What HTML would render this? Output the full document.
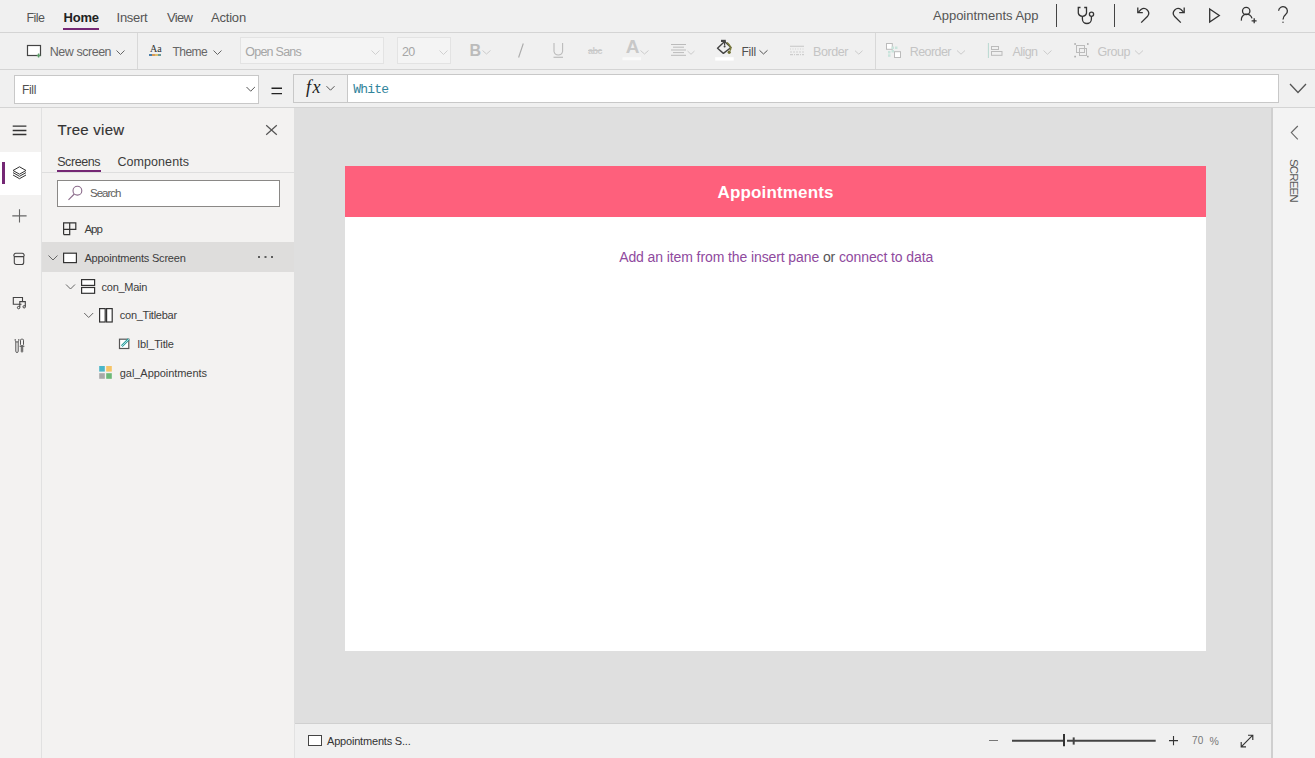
<!DOCTYPE html>
<html><head><meta charset="utf-8">
<style>
*{margin:0;padding:0;box-sizing:border-box}
html,body{width:1315px;height:758px;overflow:hidden;background:#f0f0f0;font-family:"Liberation Sans",sans-serif;color:#333}
.a{position:absolute;white-space:nowrap}
svg{position:absolute;overflow:visible}
.t{position:absolute;white-space:nowrap;line-height:1}
</style></head><body>
<!-- menu bar -->
<div class="a" style="left:0;top:0;width:1315px;height:32px;background:#f0f0f0"></div>
<div class="a" style="left:0;top:32px;width:1315px;height:1px;background:#d4d4d4"></div>
<div class="t" id="m-file" style="left:26.40px;top:12.00px;font-size:12.5px;color:#555;letter-spacing:-0.52px">File</div>
<div class="t" id="m-home" style="left:63.60px;top:11.00px;font-size:13px;color:#222;font-weight:bold;letter-spacing:-0.21px">Home</div>
<div class="a" style="left:63px;top:28px;width:36px;height:2px;background:#742774"></div>
<div class="t" id="m-ins" style="left:116.60px;top:11.00px;font-size:13px;color:#555;letter-spacing:-0.32px">Insert</div>
<div class="t" id="m-view" style="left:167.00px;top:11.00px;font-size:13px;color:#555;letter-spacing:-0.67px">View</div>
<div class="t" id="m-act" style="left:211.00px;top:11.00px;font-size:13px;color:#555;letter-spacing:-0.20px">Action</div>
<div class="t" id="m-app" style="left:933.00px;top:9.00px;font-size:13px;color:#555;letter-spacing:0.00px">Appointments App</div>
<div class="a" style="left:1056px;top:4px;width:1px;height:23px;background:#444"></div>
<div class="a" style="left:1114px;top:4px;width:1px;height:23px;background:#444"></div>

<!-- toolbar -->
<div class="a" style="left:0;top:69px;width:1315px;height:1px;background:#d4d4d4"></div>
<div class="a" style="left:137px;top:33px;width:1px;height:36px;background:#d8d8d8"></div>
<div class="a" style="left:875px;top:33px;width:1px;height:36px;background:#d8d8d8"></div>
<div class="t" id="tb-new" style="left:49.80px;top:46.00px;font-size:12.5px;color:#666;letter-spacing:-0.47px">New screen</div>
<div class="t" id="tb-theme" style="left:172.40px;top:46.00px;font-size:12px;color:#666;letter-spacing:-0.50px">Theme</div>
<div class="a" style="left:240px;top:37px;width:144px;height:27px;background:#f4f4f4;border:1px solid #e3e3e3"></div>
<div class="t" id="tb-font" style="left:245.20px;top:46.00px;font-size:12.5px;color:#a6a6a6;letter-spacing:-0.74px">Open Sans</div>
<div class="a" style="left:397px;top:37px;width:54px;height:27px;background:#f4f4f4;border:1px solid #e3e3e3"></div>
<div class="t" id="tb-size" style="left:402.00px;top:46.00px;font-size:12.5px;color:#a6a6a6;letter-spacing:-0.60px">20</div>
<div class="t" id="tb-fill" style="left:741.40px;top:46px;font-size:12px;color:#505050;letter-spacing:-0.2px">Fill</div>
<div class="t" id="tb-border" style="left:813.00px;top:46.00px;font-size:12.5px;color:#c4c4c4;letter-spacing:-0.40px">Border</div>
<div class="t" id="tb-reorder" style="left:909.80px;top:46.00px;font-size:12.5px;color:#c4c4c4;letter-spacing:-0.58px">Reorder</div>
<div class="t" id="tb-align" style="left:1012.60px;top:46.00px;font-size:12.5px;color:#c4c4c4;letter-spacing:-0.59px">Align</div>
<div class="t" id="tb-group" style="left:1097.60px;top:46.00px;font-size:12.5px;color:#c4c4c4;letter-spacing:-0.50px">Group</div>

<div class="t" id="ic-aa" style="left:150px;top:44.00px;font-size:10px;color:#333;font-family:'Liberation Serif',serif;letter-spacing:0px">Aa</div>
<div class="a" style="left:149px;top:54px;width:3px;height:2px;background:#4a7faa"></div>
<div class="a" style="left:152px;top:54px;width:3px;height:2px;background:#d99a5a"></div>
<div class="a" style="left:155px;top:54px;width:3px;height:2px;background:#e0c070"></div>
<div class="a" style="left:158px;top:54px;width:3px;height:2px;background:#6a9a9a"></div>
<div class="t" id="ic-b" style="left:469.40px;top:43.20px;font-size:16px;color:#bbb;font-weight:bold;letter-spacing:0.00px">B</div>
<div class="t" id="ic-a" style="left:625.70px;top:36.80px;font-size:19px;color:#c8c8c8;font-weight:bold;letter-spacing:0.00px">A</div>
<div class="t" id="ic-abe" style="left:588.00px;top:47.40px;font-size:9px;color:#cccccc;font-weight:bold;letter-spacing:-0.50px">abc</div>
<!-- formula bar -->
<div class="a" style="left:0;top:107px;width:1315px;height:1px;background:#d4d4d4"></div>
<div class="a" style="left:14px;top:75px;width:245px;height:29px;background:#fff;border:1px solid #c8c8c8"></div>
<div class="t" id="fb-fill" style="left:22.00px;top:84.00px;font-size:12px;color:#505050;letter-spacing:-0.34px">Fill</div>
<div class="a" style="left:293px;top:74px;width:55px;height:29px;background:#f0f0f0;border:1px solid #c8c8c8"></div>
<div class="a" style="left:347px;top:74px;width:932px;height:29px;background:#fff;border:1px solid #c8c8c8"></div>
<div class="t" id="ic-fx" style="left:306px;top:78px;font-size:18px;color:#222;font-family:'Liberation Serif',serif;font-style:italic;letter-spacing:1.5px">fx</div>
<div class="t" id="fb-white" style="left:353.20px;top:83.00px;font-size:13px;color:#31849b;font-family:'Liberation Mono',monospace;letter-spacing:-0.80px">White</div>

<!-- left rail -->
<div class="a" style="left:0;top:108px;width:41px;height:650px;background:#f3f2f1"></div>
<div class="a" style="left:41px;top:108px;width:1px;height:650px;background:#e1e1e1"></div>
<div class="a" style="left:0;top:152px;width:41px;height:43px;background:#fff"></div>
<div class="a" style="left:2px;top:162px;width:3px;height:22px;background:#742774"></div>

<!-- tree panel -->
<div class="a" style="left:42px;top:108px;width:252px;height:650px;background:#f3f2f1"></div>
<div class="t" id="tv-title" style="-webkit-text-stroke:0.15px #333;left:57.60px;top:122.20px;font-size:15px;color:#333;letter-spacing:0.26px">Tree view</div>
<div class="t" id="tv-screens" style="left:57.20px;top:156.00px;font-size:12.5px;color:#3c3c3c;letter-spacing:-0.42px">Screens</div>
<div class="a" style="left:57px;top:170px;width:44px;height:2px;background:#742774"></div>
<div class="t" id="tv-comp" style="left:117.40px;top:156.00px;font-size:12.5px;color:#3c3c3c;letter-spacing:0.08px">Components</div>
<div class="a" style="left:42px;top:172px;width:252px;height:1px;background:#dedede"></div>
<div class="a" style="left:57px;top:180px;width:223px;height:27px;background:#fff;border:1px solid #8a8886"></div>
<div class="t" id="tv-search" style="left:90.00px;top:188.20px;font-size:11.5px;color:#605e5c;letter-spacing:-1.00px">Search</div>
<div class="t" id="tv-app" style="left:84.40px;top:224.00px;font-size:11.5px;color:#3c3c3c;letter-spacing:-1.00px">App</div>
<div class="a" style="left:42px;top:242px;width:252px;height:30px;background:#dedddc"></div>
<div class="t" id="tv-scr" style="left:84.40px;top:253.00px;font-size:11px;color:#3c3c3c;letter-spacing:-0.21px">Appointments Screen</div>
<div class="t" id="tv-main" style="left:101.60px;top:282.00px;font-size:11px;color:#3c3c3c;letter-spacing:-0.29px">con_Main</div>
<div class="t" id="tv-tb" style="left:119.80px;top:310.00px;font-size:11px;color:#3c3c3c;letter-spacing:-0.26px">con_Titlebar</div>
<div class="t" id="tv-lbl" style="left:137.60px;top:339.00px;font-size:11px;color:#3c3c3c;letter-spacing:-0.14px">lbl_Title</div>
<div class="t" id="tv-gal" style="left:119.80px;top:368.00px;font-size:11px;color:#3c3c3c;letter-spacing:-0.06px">gal_Appointments</div>

<!-- canvas area -->
<div class="a" style="left:294px;top:108px;width:977px;height:615px;background:#dfdfdf"></div>
<div class="a" style="left:345px;top:166px;width:861px;height:485px;background:#fff"></div>
<div class="a" style="left:345px;top:166px;width:861px;height:51px;background:#fe607c"></div>
<div class="t" id="cv-title" style="left:717.60px;top:183.80px;font-size:17px;color:#fff;font-weight:bold;letter-spacing:0.15px">Appointments</div>
<div class="t" id="cv-add" style="left:619.20px;top:249.60px;font-size:14px;color:#8f4a9e;letter-spacing:-0.10px">Add an item from the insert pane <span style="color:#555">or</span> connect to data</div>

<!-- bottom bar -->
<div class="a" style="left:294px;top:723px;width:977px;height:1px;background:#d0d0d0"></div>
<div class="a" style="left:294px;top:724px;width:977px;height:34px;background:#f0f0f0"></div>
<div class="a" style="left:308px;top:735px;width:14px;height:11px;background:#fff;border:1px solid #444"></div>
<div class="t" id="bb-scr" style="left:327.00px;top:735.60px;font-size:11px;color:#333;letter-spacing:-0.19px">Appointments S...</div>
<div class="t" id="bb-70" style="left:1192.00px;top:736.00px;font-size:10px;color:#777;letter-spacing:0.2px">70</div>
<div class="t" id="bb-pct" style="left:1209.40px;top:736.00px;font-size:10.5px;color:#777;letter-spacing:0.00px">%</div>

<div class="a" style="left:294px;top:723px;width:1px;height:35px;background:#e2e2e2"></div>
<!-- right panel -->
<div class="a" style="left:1271px;top:108px;width:2px;height:650px;background:#cfcfcf"></div>
<div class="a" style="left:1273px;top:108px;width:42px;height:650px;background:#f3f3f3"></div>
<div class="t" id="rp-screen" style="left:1287.4px;top:159px;font-size:11.5px;color:#5a5a5a;writing-mode:vertical-rl;letter-spacing:-0.85px">SCREEN</div>


<svg width="1315" height="758" style="left:0;top:0" fill="none" stroke-linecap="butt">
<!-- top right icons -->
<g stroke="#333" stroke-width="1.3">
 <path d="M1080.5 7.5H1078.3V13A4.2 4.2 0 0 0 1086.5 13V7.5H1084.2"/>
 <path d="M1082.4 17V19A4.5 4.5 0 0 0 1091.4 19V16.4"/>
 <circle cx="1091.5" cy="14.2" r="2.1"/>
 <path d="M1141.2 22.6L1147.6 16.2A4.7 4.7 0 0 0 1141 9.6L1138.2 12.4"/>
 <path d="M1137.8 7.6V12.6H1142.8"/>
 <path d="M1180.8 22.6L1174.4 16.2A4.7 4.7 0 0 1 1181 9.6L1183.8 12.4"/>
 <path d="M1184.2 7.6V12.6H1179.2"/>
 <path d="M1209.7 9L1219.3 15.5L1209.7 22Z" stroke-linejoin="miter"/>
 <circle cx="1246.2" cy="11" r="3.7"/>
 <path d="M1241.4 20.6A5.2 5.2 0 0 1 1252 18.4"/>
 <path d="M1251.6 20.9H1256.6M1254.2 18.3V23.3"/>
 <path d="M1278.6 10.8A4.4 4.4 0 1 1 1285.6 14.6C1283.6 16.2 1283 17 1283 19.5"/>
</g>
<circle cx="1283" cy="22.2" r="0.7" fill="#333"/>
<!-- toolbar icons -->
<rect x="27.5" y="45.5" width="13" height="10" fill="#fff" stroke="#444" stroke-width="1.2"/>
<path d="M36.8 55.5H40.4M38.6 53.6V57.4" stroke="#5a9a66" stroke-width="1.4"/>
<path d="M116.5 50.5L120.5 54.5L124.5 50.5" stroke="#666" stroke-width="1"/>
<path d="M213.5 50.5L217.5 54.5L221.5 50.5" stroke="#666" stroke-width="1"/>
<path d="M371.5 50.5L375.5 54.5L379.5 50.5" stroke="#d0d0d0" stroke-width="1"/>
<path d="M439.5 50.5L443.5 54.5L447.5 50.5" stroke="#d0d0d0" stroke-width="1"/>
<path d="M482.5 50.5L486.5 54L490.5 50.5" stroke="#ccc" stroke-width="1"/>
<path d="M523.3 43.5L518.6 57.5" stroke="#aaa" stroke-width="1.1"/>
<path d="M554 43V51.5A4.4 4.4 0 0 0 562.6 51.5V43" stroke="#bbb" stroke-width="1.1"/>
<path d="M553.5 57.3H563" stroke="#bbb" stroke-width="1.2"/>
<path d="M588 50.5H602" stroke="#c8c8c8" stroke-width="1"/>
<path d="M640.5 50.5L644.5 54L648.5 50.5" stroke="#ccc" stroke-width="1"/>
<rect x="622.5" y="57.3" width="18.5" height="3" fill="#f9f9f9"/>
<path d="M671 44.5H686M673 47.2H684M671 50H686M673 52.6H684M671 55.3H686" stroke="#bbb" stroke-width="1"/>
<path d="M687.5 51L691 54.3L694.5 51" stroke="#ccc" stroke-width="1"/>
<!-- fill icon -->
<path d="M717.5 48.2L724.6 41.6L731 47.5L723.4 53.4Z" stroke="#444" stroke-width="1.4" stroke-linejoin="round"/>
<rect x="721" y="39.8" width="4.8" height="2.2" fill="#444"/><path d="M724.6 42V45.5" stroke="#444" stroke-width="1.2"/>
<circle cx="724.6" cy="46.5" r="1" fill="#444"/>
<path d="M727 42.5C730 45 731.5 48 730 50.5" stroke="#7b7b3a" stroke-width="1.6"/>
<ellipse cx="729.2" cy="52.2" rx="1.6" ry="1.8" fill="#6e6e30"/>
<rect x="715.2" y="57.2" width="18.5" height="3.4" fill="#fff"/>
<path d="M759.5 50.3L763.5 54L767.5 50.3" stroke="#555" stroke-width="1"/>
<path d="M790 46.3H804" stroke="#ccc" stroke-width="1.2"/>
<path d="M790 49H804" stroke="#d4d4d4" stroke-width="1" stroke-dasharray="1 1.5"/>
<path d="M790 52H804" stroke="#d0d0d0" stroke-width="1.2" stroke-dasharray="2 1"/>
<path d="M790 54.6H804" stroke="#cdcdcd" stroke-width="1.2" stroke-dasharray="3 1 1 1"/>
<path d="M855 50.7L858.8 54.2L862.5 50.7" stroke="#ccc" stroke-width="1"/>
<rect x="886.5" y="43.5" width="5.8" height="5.8" fill="#fff" stroke="#bbb" stroke-width="1"/>
<rect x="894.5" y="51.7" width="6" height="5.8" fill="#fff" stroke="#bbb" stroke-width="1"/>
<g fill="#c9e4dc"><rect x="888" y="51" width="2.5" height="2.5"/><rect x="888" y="54.3" width="2.5" height="2.5"/><rect x="891.5" y="46.5" width="2.5" height="2.5"/><rect x="895" y="46.5" width="2.5" height="2.5"/><rect x="891.5" y="50" width="2.5" height="2.5"/></g>
<path d="M957 50.5L961 54.2L965 50.5" stroke="#ccc" stroke-width="1"/>
<path d="M988.4 43V58" stroke="#b8d8d0" stroke-width="1"/>
<rect x="991.5" y="46.5" width="7" height="3" stroke="#bbb" stroke-width="1"/>
<rect x="991.5" y="51.5" width="10.5" height="3.8" stroke="#bbb" stroke-width="1"/>
<path d="M1043.5 50.5L1047.5 54.3L1051.5 50.5" stroke="#ccc" stroke-width="1"/>
<g stroke="#bbb" stroke-width="1">
<rect x="1076.5" y="45.5" width="8" height="7"/>
<rect x="1079.5" y="48.5" width="7" height="7"/>
</g>
<g fill="#aaa"><rect x="1074.3" y="43.2" width="1.6" height="1.6"/><rect x="1087" y="43.2" width="1.6" height="1.6"/><rect x="1074.3" y="55.8" width="1.6" height="1.6"/><rect x="1087" y="55.8" width="1.6" height="1.6"/></g>
<path d="M1135 50.5L1139 54.3L1143 50.5" stroke="#ccc" stroke-width="1"/>
<!-- formula bar -->
<path d="M246.5 87L250.7 91.2L254.9 87" stroke="#555" stroke-width="1"/>
<path d="M271.5 88.3H282M271.5 93.6H282" stroke="#222" stroke-width="1.4"/>
<path d="M326.5 86.2L330.5 90.2L334.5 86.2" stroke="#555" stroke-width="1"/>
<path d="M1290 84L1298 92.5L1306 84" stroke="#555" stroke-width="1.3"/>
<!-- left rail -->
<path d="M12.7 126.1H26.4M12.7 130.5H26.4M12.7 134.5H26.4" stroke="#333" stroke-width="1.3"/>
<g stroke="#333" stroke-width="1" stroke-linejoin="round">
<path d="M13 170.5L19.5 166.8L26 170.5L19.5 174.2Z"/>
<path d="M13 172.6L19.5 176.3L26 172.6"/>
<path d="M13 175L19.5 178.7L26 175"/>
</g>
<path d="M12.3 215.9H26.6M19.5 209.2V222.6" stroke="#666" stroke-width="1.1"/>
<path d="M14.3 256.5V262.5A2 2 0 0 0 16.3 264.5H21.7A2 2 0 0 0 23.7 262.5V256.5A2 2 0 0 0 21.7 253.3H16.3A2 2 0 0 0 14.3 256.5ZM14.3 256.6H23.7" stroke="#444" stroke-width="1.1"/>
<path d="M21.5 304.3H13.3V297.5H22.5V301.5" stroke="#444" stroke-width="1.1"/>
<path d="M19.8 307.2V301.6H25.3V306.5" stroke="#444" stroke-width="1.1"/>
<circle cx="18.6" cy="307.6" r="1.2" stroke="#444" stroke-width="1"/>
<circle cx="24.2" cy="306.8" r="1.2" stroke="#444" stroke-width="1"/>
<g stroke="#555" stroke-width="1" fill="none">
<path d="M15.8 341.8V351.3A1.2 1.2 0 0 0 18.2 351.3V341.8"/>
<path d="M15.2 339V340.3A1.8 1.8 0 0 0 18.8 340.3V339"/>
<rect x="20.5" y="339.2" width="3" height="6.3" rx="1"/>
<path d="M19.6 346.3H24.4M21.3 346.5V351.5A0.7 0.7 0 0 0 22.7 351.5V346.5"/>
</g>

<!-- tree panel -->
<path d="M266.2 125.2L276.8 134.8M276.8 125.2L266.2 134.8" stroke="#555" stroke-width="1.2"/>
<circle cx="77.4" cy="190.7" r="4.4" stroke="#8a6a8a" stroke-width="1.1"/>
<path d="M74.3 194L68.5 199.8" stroke="#8a6a8a" stroke-width="1.1"/>
<g stroke="#333" stroke-width="1.2">
<path d="M63.6 234.6V222.8H75.8V229.3H63.6M69.7 222.8V234.6H63.6"/>
</g>
<path d="M48.5 255.5L53 260L57.5 255.5" stroke="#666" stroke-width="1"/>
<rect x="63.6" y="253.2" width="12.8" height="9.4" fill="#fff" stroke="#333" stroke-width="1.2"/>
<path d="M66 284.5L70.5 289L75 284.5" stroke="#666" stroke-width="1"/>
<rect x="81.6" y="279.6" width="13" height="5.8" fill="#fff" stroke="#333" stroke-width="1.2"/>
<rect x="81.6" y="287.5" width="13" height="5.8" fill="#fff" stroke="#333" stroke-width="1.2"/>
<path d="M84.2 313L88.7 317.5L93.2 313" stroke="#666" stroke-width="1"/>
<rect x="99.6" y="308.6" width="5.6" height="13.4" fill="#fff" stroke="#333" stroke-width="1.2"/>
<rect x="106.6" y="308.6" width="5.6" height="13.4" fill="#fff" stroke="#333" stroke-width="1.2"/>
<rect x="119.5" y="339.2" width="9.3" height="9.3" fill="#fff" stroke="#555" stroke-width="1.2"/>
<path d="M121.8 346.2L128.8 339.2" stroke="#2a9d9d" stroke-width="2.4"/>
<path d="M121.8 346.2L128.8 339.2" stroke="#e8fafa" stroke-width="0.7"/>
<rect x="99.2" y="366" width="5.6" height="5.6" fill="#4ab6c8"/>
<rect x="106.2" y="366" width="5.6" height="5.6" fill="#f6c466"/>
<rect x="99.2" y="373.2" width="5.6" height="5.6" fill="#a8a8a8"/>
<rect x="106.2" y="373.2" width="5.6" height="5.6" fill="#6cb877"/>
<path d="M258 257H260M264.5 257H266.5M271 257H273" stroke="#333" stroke-width="1.5"/>
<!-- bottom bar -->
<path d="M989 740.5H998" stroke="#777" stroke-width="1"/>
<path d="M1012 740.8H1063M1067 740.8H1155.7" stroke="#444" stroke-width="2"/>
<path d="M1064 734V746.3" stroke="#333" stroke-width="2"/>
<path d="M1073.7 737.4V744.6" stroke="#444" stroke-width="2"/>
<path d="M1169 740.6H1178M1173.5 736V745.2" stroke="#333" stroke-width="1.1"/>
<path d="M1241.2 746.8L1252.8 735.2M1241.2 742V746.8H1246M1248 735.2H1252.8V740" stroke="#333" stroke-width="1.15"/>
<!-- right panel -->
<path d="M1297.8 126L1291.3 132.6L1297.8 139.3" stroke="#666" stroke-width="1.1"/>
</svg>

</body></html>
